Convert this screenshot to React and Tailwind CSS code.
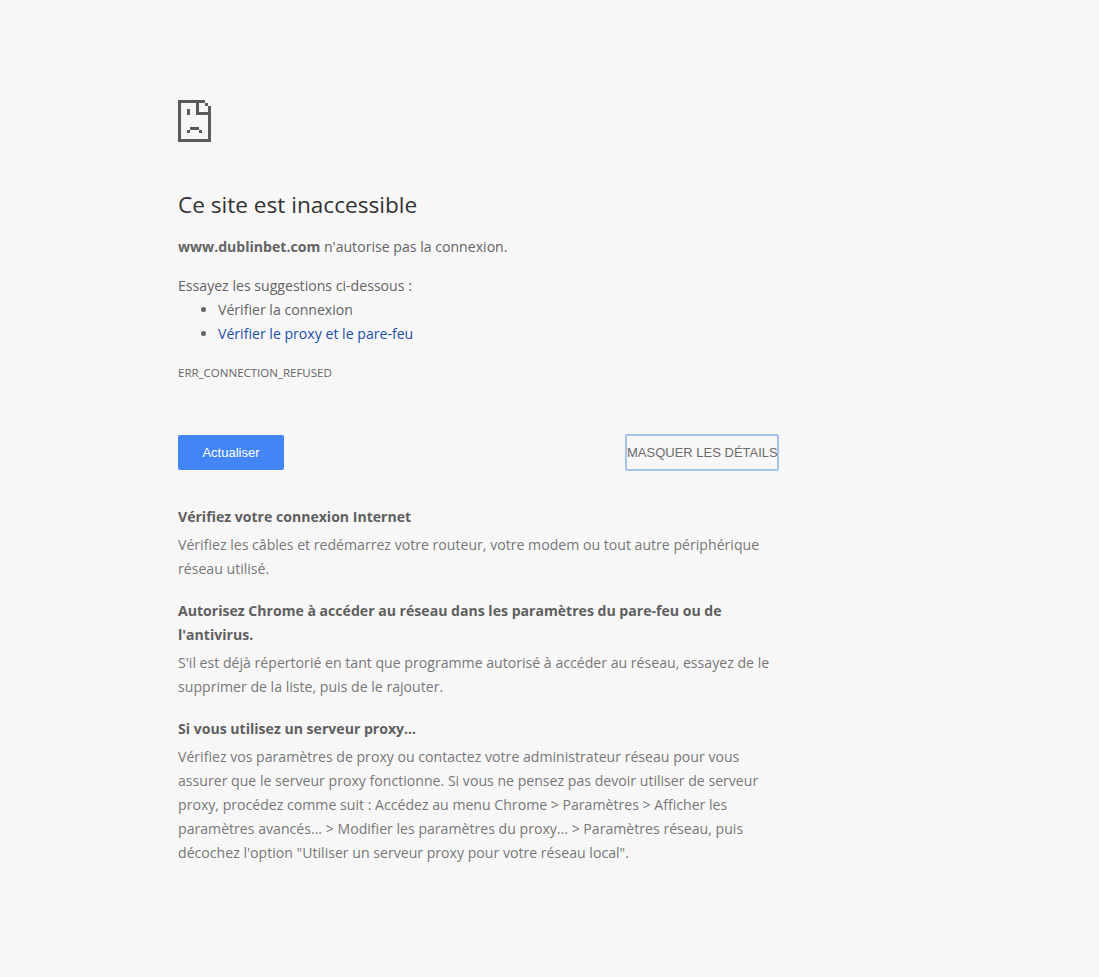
function SadFileIcon() {
  // pixel art, one unit = 3px
  const cells = [
    [0, 0, 8, 1], [0, 1, 1, 12], [0, 13, 11, 1], [10, 2, 1, 11],
    [8, 0, 1, 1], [9, 1, 1, 1],
    [6, 1, 1, 3], [6, 4, 5, 1],
    [3, 3, 1, 2],
    [4, 9, 3, 1], [3, 10, 1, 1], [7, 10, 1, 1],
  ];
  return (
    <svg width="33" height="42" viewBox="0 0 11 14" shapeRendering="crispEdges" fill="#5a5a5a">
      {cells.map(([x, y, w, h], i) => (
        <rect key={i} x={x} y={y} width={w} height={h} />
      ))}
    </svg>
  );
}

function App() {
  return (
    <div className="min-h-[977px] bg-[#f7f7f7] pl-[178px] pt-[100px] text-[14.12px] leading-6 text-[#646464] font-['Open_Sans','Noto_Sans',sans-serif]">
      <div className="w-[601px]">
        <SadFileIcon />

        <h1 className="mt-[46px] text-[22.6px] leading-[34px] text-[#333333]">Ce site est inaccessible</h1>

        <p className="mt-[13px]">
          <b className="text-[14.08px] font-bold">www.dublinbet.com</b> n'autorise pas la connexion.
        </p>

        <p className="mt-[15px]">Essayez les suggestions ci-dessous :</p>
        <ul className="list-disc pl-10">
          <li>Vérifier la connexion</li>
          <li>
            <span className="text-[#1c4fa8]">Vérifier le proxy et le pare-feu</span>
          </li>
        </ul>

        <div className="mt-[18px] text-[11.5px] leading-[18px]">ERR_CONNECTION_REFUSED</div>

        <div className="mt-[52px] flex items-center justify-between">
          <button className="h-[35px] w-[106px] rounded-[2px] bg-[#4285f4] text-[13px] font-['Liberation_Sans',sans-serif] text-white">
            Actualiser
          </button>
          <button className="h-[37px] w-[154px] rounded-[2px] border-2 border-[#a5c3ea] text-[13px] font-['Liberation_Sans',sans-serif] text-[#6b6b6b] whitespace-nowrap">
            MASQUER LES DÉTAILS
          </button>
        </div>

        <div className="mt-[34px] text-[#777777]">
          <h2 className="text-[14.08px] font-bold text-[#5f5f5f]">Vérifiez votre connexion Internet</h2>
          <p className="mt-[4px]">
            Vérifiez les câbles et redémarrez votre routeur, votre modem ou tout autre périphérique réseau utilisé.
          </p>

          <h2 className="mt-[18px] text-[14.08px] font-bold text-[#5f5f5f]">
            Autorisez Chrome à accéder au réseau dans les paramètres du pare-feu ou de l'antivirus.
          </h2>
          <p className="mt-[4px]">
            S'il est déjà répertorié en tant que programme autorisé à accéder au réseau, essayez de le supprimer de la liste, puis de le rajouter.
          </p>

          <h2 className="mt-[18px] text-[14.08px] font-bold text-[#5f5f5f]">Si vous utilisez un serveur proxy...</h2>
          <p className="mt-[4px]">
            Vérifiez vos paramètres de proxy ou contactez votre administrateur réseau pour vous assurer que le serveur proxy fonctionne. Si vous ne pensez pas devoir utiliser de serveur proxy, procédez comme suit : Accédez au menu Chrome &gt; Paramètres &gt; Afficher les paramètres avancés... &gt; Modifier les paramètres du proxy... &gt; Paramètres réseau, puis décochez l'option "Utiliser un serveur proxy pour votre réseau local".
          </p>
        </div>
      </div>
    </div>
  );
}

export default App;
